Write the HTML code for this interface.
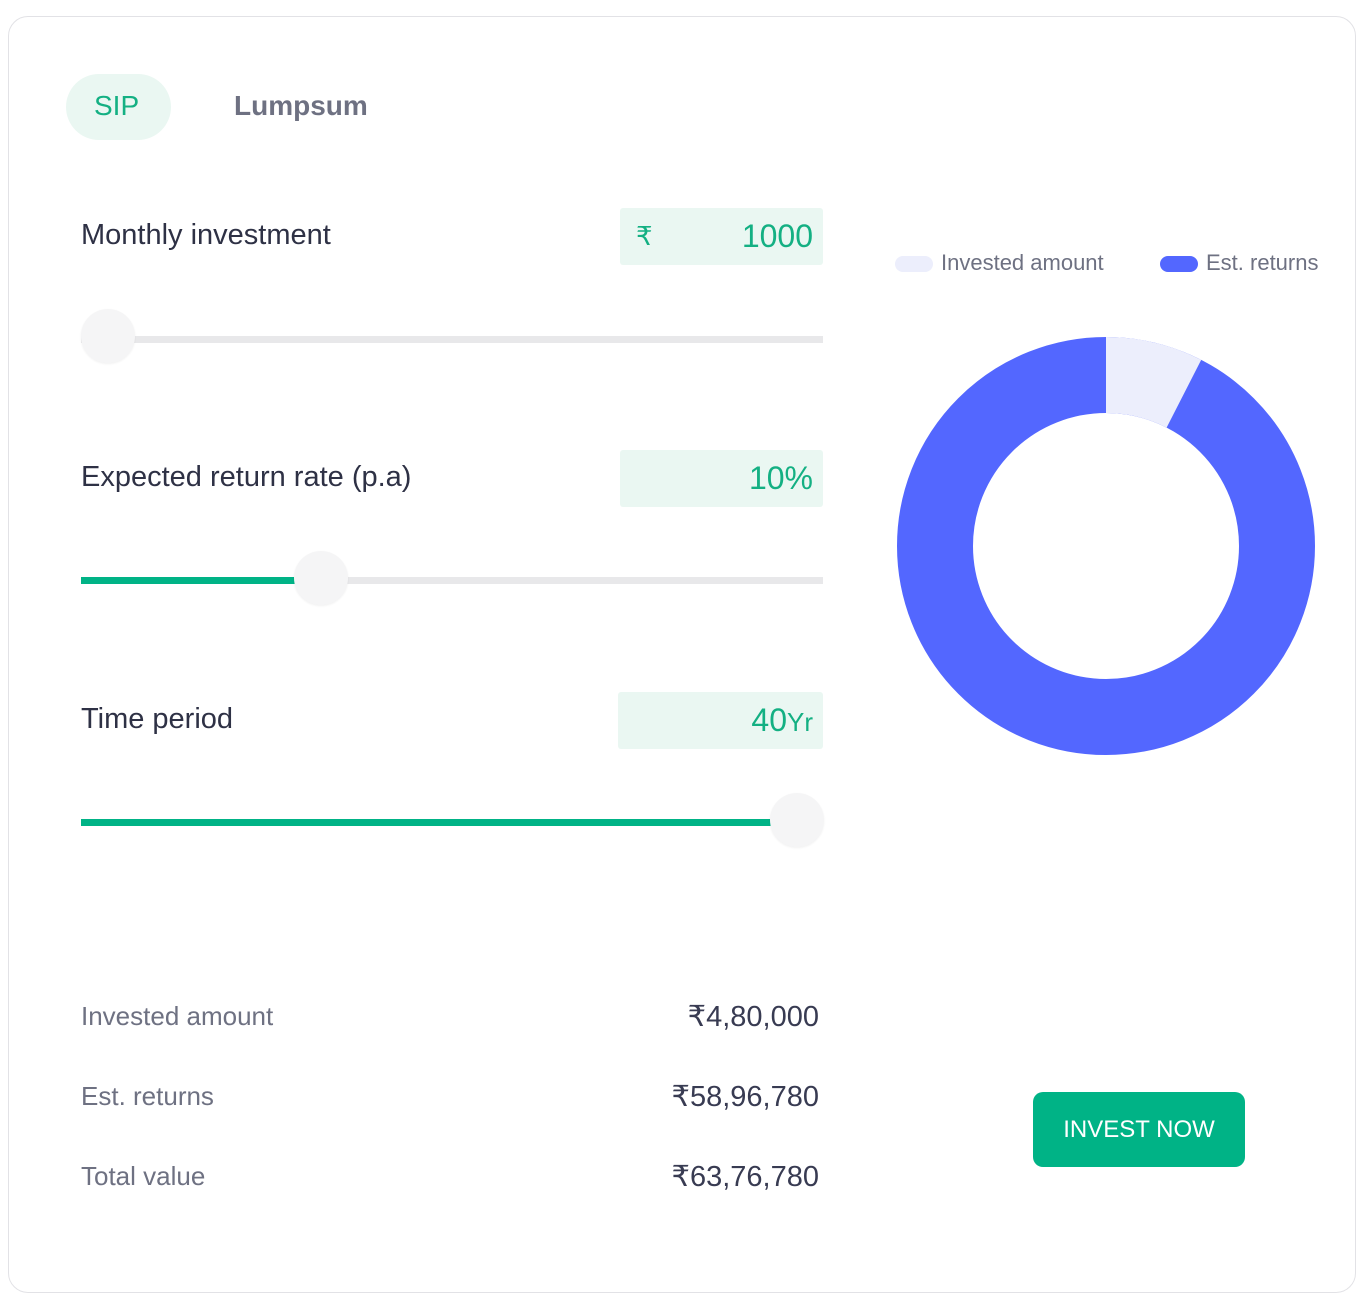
<!DOCTYPE html>
<html><head><meta charset="utf-8"><style>
body{margin:0;width:1358px;height:1305px;background:#fff;font-family:"Liberation Sans","DejaVu Sans",sans-serif;position:relative;overflow:hidden}
.a{position:absolute;white-space:nowrap}
.card{position:absolute;left:8px;top:16px;width:1348px;height:1277px;border:1.5px solid #e2e2e6;border-radius:20px;box-sizing:border-box}
.lab{font-size:29px;color:#2e3145}
.box{position:absolute;background:#eaf7f2;height:57px;border-radius:3px;color:#14b083;font-size:32px;line-height:57px;text-align:right;box-sizing:border-box;padding-right:10px}
.track{position:absolute;left:81px;width:742px;height:7px;background:#e8e8ea}
.fill{position:absolute;left:81px;height:7px;background:#00b386}
.knob{position:absolute;width:54px;height:54px;border-radius:50%;background:#f5f5f6;box-shadow:0 1px 2px rgba(0,0,0,.06)}
.k{font-size:26px;color:#6e7182}
.v{font-size:29px;color:#383b52;text-align:right;width:300px}
</style></head><body>
<div class="card"></div>
<div class="a" style="left:66px;top:74px;width:105px;height:66px;border-radius:33px;background:#eaf7f2"></div>
<div class="a" style="left:94px;top:90px;font-size:28px;color:#14b083">SIP</div>
<div class="a" style="left:234px;top:90px;font-size:28px;color:#6e7182;font-weight:bold">Lumpsum</div>

<div class="a lab" style="left:81px;top:219px">Monthly investment</div>
<div class="box" style="left:620px;top:208px;width:203px"><span style="position:absolute;left:16px;font-size:26px">₹</span>1000</div>
<div class="track" style="top:336px"></div>
<div class="knob" style="left:81px;top:309px"></div>

<div class="a lab" style="left:81px;top:461px">Expected return rate (p.a)</div>
<div class="box" style="left:620px;top:450px;width:203px">10%</div>
<div class="track" style="top:577px"></div>
<div class="fill" style="top:577px;width:240px"></div>
<div class="knob" style="left:294px;top:551px"></div>

<div class="a lab" style="left:81px;top:703px">Time period</div>
<div class="box" style="left:618px;top:692px;width:205px">40<span style="font-size:26px">Yr</span></div>
<div class="fill" style="top:819px;width:700px"></div>
<div class="knob" style="left:770px;top:793px"></div>

<div class="a" style="left:895px;top:256px;width:38px;height:16px;border-radius:8px;background:#eceefc"></div>
<div class="a k" style="left:941px;top:250px;font-size:22px">Invested amount</div>
<div class="a" style="left:1160px;top:256px;width:38px;height:16px;border-radius:8px;background:#5367ff"></div>
<div class="a k" style="left:1206px;top:250px;font-size:22px">Est. returns</div>

<svg class="a" style="left:0;top:0" width="1358" height="1305">
<circle cx="1106" cy="546" r="171" fill="none" stroke="#5367ff" stroke-width="76"/>
<path d="M1106 337 A209 209 0 0 1 1201.2 359.9 L1166.6 427.6 A133 133 0 0 0 1106 413 Z" fill="#eceefc"/>
</svg>

<div class="a k" style="left:81px;top:1001px">Invested amount</div>
<div class="a v" style="left:519px;top:999px">₹4,80,000</div>
<div class="a k" style="left:81px;top:1081px">Est. returns</div>
<div class="a v" style="left:519px;top:1079px">₹58,96,780</div>
<div class="a k" style="left:81px;top:1161px">Total value</div>
<div class="a v" style="left:519px;top:1159px">₹63,76,780</div>

<div class="a" style="left:1033px;top:1092px;width:212px;height:75px;border-radius:10px;background:#00b386;color:#fff;font-size:24px;line-height:75px;text-align:center">INVEST NOW</div>
</body></html>
